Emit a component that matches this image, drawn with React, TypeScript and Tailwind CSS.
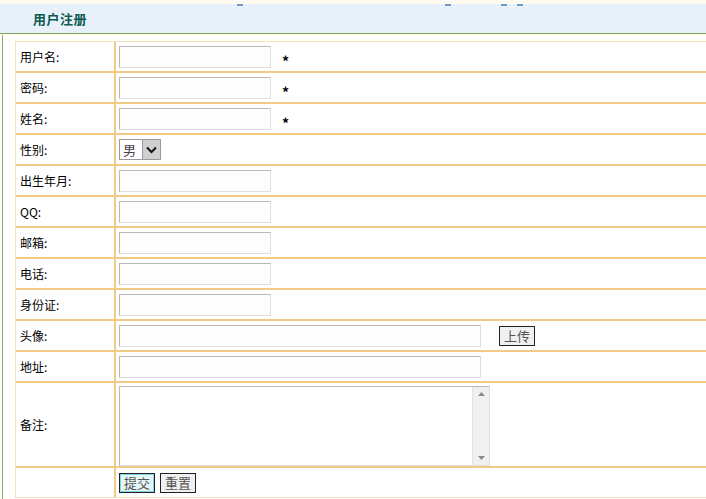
import React from "react";

const FONT = { fontFamily: '"Noto Sans CJK SC", "Liberation Sans", sans-serif' };

type Row = { label: string; kind: "text" | "req" | "select" | "wide" | "upload" };

const ROWS: Row[] = [
  { label: "用户名:", kind: "req" },
  { label: "密码:", kind: "req" },
  { label: "姓名:", kind: "req" },
  { label: "性别:", kind: "select" },
  { label: "出生年月:", kind: "text" },
  { label: "QQ:", kind: "text" },
  { label: "邮箱:", kind: "text" },
  { label: "电话:", kind: "text" },
  { label: "身份证:", kind: "text" },
  { label: "头像:", kind: "upload" },
  { label: "地址:", kind: "wide" },
];

function Input({ wide }: { wide?: boolean }) {
  return (
    <div
      className={`h-[22px] ${wide ? "w-[362px]" : "w-[152px]"} border border-[#b9b9b9] border-r-[#dedede] border-b-[#dedede] bg-[#fdfdfd]`}
    />
  );
}

function Btn({ text, active }: { text: string; active?: boolean }) {
  return (
    <div
      className={`h-[20px] w-[36px] flex items-center justify-center border border-[#222] text-[13px] text-[#555] leading-none ${
        active ? "bg-[#e4f6f6] shadow-[inset_0_0_0_1px_#7fd6e0]" : "bg-[#f0f0f0]"
      }`}
    >
      {text}
    </div>
  );
}

function Value({ kind }: { kind: Row["kind"] }) {
  if (kind === "select") {
    return (
      <div className="flex h-[21px] w-[42px] border border-[#9a9a9a] bg-white">
        <div className="flex-1 flex items-center pl-[3px] text-[13px] text-[#444] leading-none">男</div>
        <div className="w-[18px] bg-[#cfd0d2] border-l border-[#9a9a9a] flex items-center justify-center">
          <svg width="11" height="8" viewBox="0 0 11 8">
            <path d="M1 1.5 L5.5 6 L10 1.5" fill="none" stroke="#111" strokeWidth="2" />
          </svg>
        </div>
      </div>
    );
  }
  if (kind === "req") {
    return (
      <div className="flex items-start">
        <Input />
        <span className="ml-[11px] mt-[8px] text-[14px] leading-none font-bold">*</span>
      </div>
    );
  }
  if (kind === "upload") {
    return (
      <div className="flex items-center">
        <Input wide />
        <div className="ml-[18px]">
          <Btn text="上传" />
        </div>
      </div>
    );
  }
  return <Input wide={kind === "wide"} />;
}

export default function App() {
  return (
    <div className="w-[706px] h-[499px] overflow-hidden bg-white text-black" style={FONT}>
      {/* Header */}
      <div className="relative h-[35px] bg-[#fffaf0] pt-[4px]">
        <div className="h-[30px] bg-[#e8f0fa] border-b border-[#83a55b] flex items-center pl-[33px]">
          <span className="text-[13px] font-bold text-[#0d5a52] tracking-[0.5px]">用户注册</span>
        </div>
        <div className="absolute top-[4px] left-[237px] w-[6px] h-[2px] bg-[#6d9ccb]" />
        <div className="absolute top-[4px] left-[445px] w-[6px] h-[2px] bg-[#6d9ccb]" />
        <div className="absolute top-[4px] left-[501px] w-[6px] h-[2px] bg-[#6d9ccb]" />
        <div className="absolute top-[4px] left-[517px] w-[6px] h-[2px] bg-[#6d9ccb]" />
      </div>

      {/* Body */}
      <div className="ml-[2px] border-l border-[#8aae60] pl-[12px] pt-[6px] h-[464px] bg-[#fffffb]">
        <div className="w-[720px] border-t border-l border-b border-[#f3e2bb]">
          <div className="grid grid-cols-[98px_1fr] grid-rows-[repeat(11,29px)_83px_29px] gap-[2px] bg-[#f2ca83]">
            {ROWS.map((r) => (
              <React.Fragment key={r.label}>
                <div className="bg-white flex items-center pl-[4px] text-[12px]">{r.label}</div>
                <div className="bg-white flex items-center pl-[3px]">
                  <Value kind={r.kind} />
                </div>
              </React.Fragment>
            ))}
            <div className="bg-white flex items-center pl-[4px] text-[12px]">备注:</div>
            <div className="bg-white pl-[3px] pt-[3px]">
              <div className="flex h-[80px] w-[371px] border border-[#b9b9b9] border-r-[#dedede] border-b-[#dedede] bg-white">
                <div className="flex-1" />
                <div className="w-[17px] bg-[#f0f0f0] border-l border-[#e2e2e2] flex flex-col justify-between items-center py-[5px]">
                  <svg width="7" height="4" viewBox="0 0 7 4">
                    <path d="M0 4 L3.5 0 L7 4 Z" fill="#888" />
                  </svg>
                  <svg width="7" height="4" viewBox="0 0 7 4">
                    <path d="M0 0 L3.5 4 L7 0 Z" fill="#888" />
                  </svg>
                </div>
              </div>
            </div>
            <div className="bg-white" />
            <div className="bg-white flex items-center pl-[3px] gap-[5px]">
              <Btn text="提交" active />
              <Btn text="重置" />
            </div>
          </div>
        </div>
      </div>
    </div>
  );
}
